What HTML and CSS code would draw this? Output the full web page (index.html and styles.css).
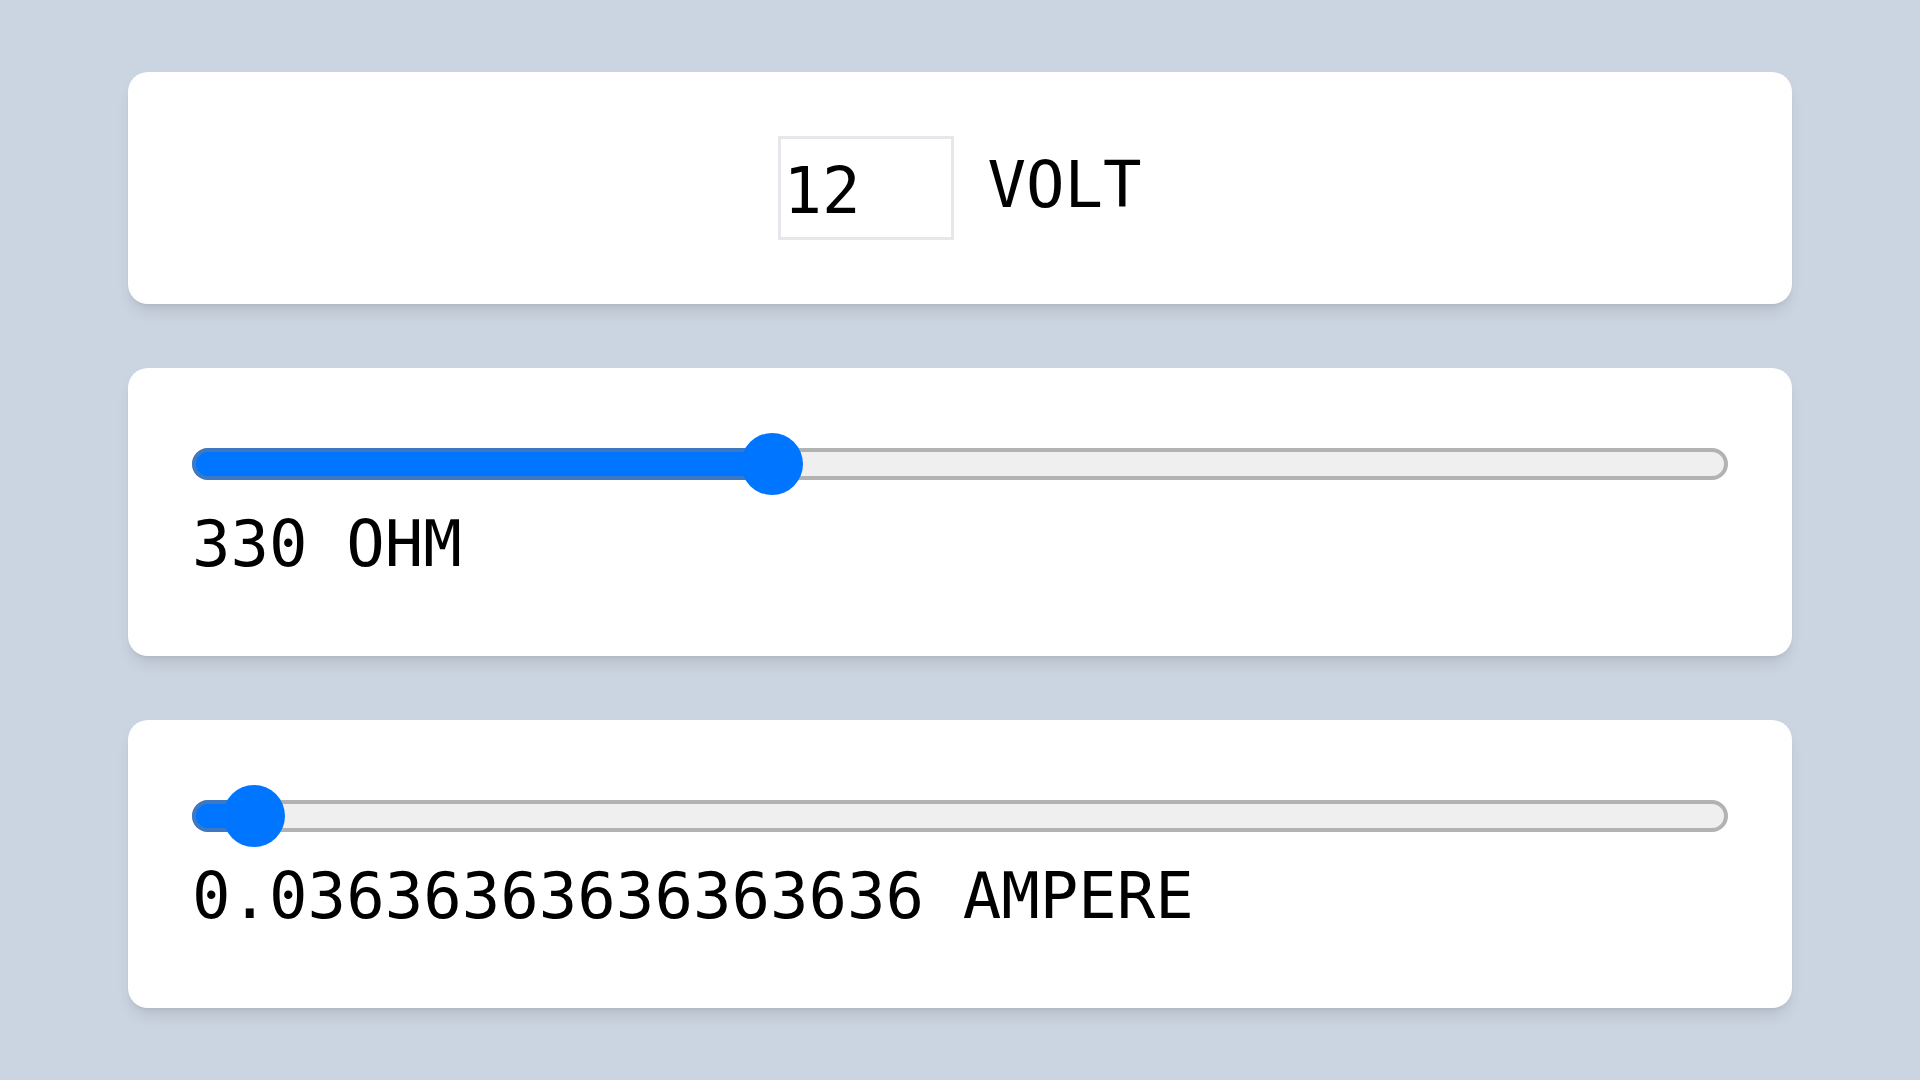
FILE: index.html
```html
<!DOCTYPE html>
<html lang="en">
<head>
<meta charset="utf-8">
<title>Ohm's law</title>
<link rel="stylesheet" href="styles.css">
</head>
<body>
<main class="stack">
  <section class="card card-volt">
    <div class="volt-row">
      <input class="volt-input" type="text" value="12">
      <span class="unit">VOLT</span>
    </div>
  </section>
  <section class="card">
    <div class="range" style="--f: 0.3725">
      <div class="track">
        <div class="fill"></div>
      </div>
      <div class="thumb"></div>
    </div>
    <div class="value">330 OHM</div>
  </section>
  <section class="card">
    <div class="range" style="--f: 0.0207">
      <div class="track">
        <div class="fill"></div>
      </div>
      <div class="thumb"></div>
    </div>
    <div class="value">0.03636363636363636 AMPERE</div>
  </section>
</main>
</body>
</html>
```
FILE: styles.css
```css
html, body {
  margin: 0;
  padding: 0;
}
body {
  background: #cbd5e1;
  font-family: "DejaVu Sans Mono", "Liberation Mono", monospace;
  color: #000;
  width: 1920px;
  height: 1080px;
  overflow: hidden;
}
.stack {
  display: flex;
  flex-direction: column;
  gap: 64px;
  padding: 72px 128px;
}
.card {
  background: #fff;
  border-radius: 20px;
  padding: 64px;
  box-shadow: 0 10px 15px -3px rgba(0, 0, 0, 0.1), 0 4px 6px -4px rgba(0, 0, 0, 0.1);
}
.volt-row {
  display: flex;
  justify-content: center;
  align-items: center;
  height: 104px;
  gap: 33px;
}
.volt-input {
  box-sizing: border-box;
  width: 176px;
  height: 104px;
  border: 3px solid #e5e7eb;
  border-radius: 0;
  padding: 0 2px;
  margin: 0;
  font-family: "DejaVu Sans Mono", "Liberation Mono", monospace;
  font-size: 64px;
  color: #000;
  background: #fff;
  outline: none;
  padding-top: 6px;
}
.unit {
  font-size: 64px;
  line-height: 1.5;
  margin-bottom: 6px;
}
.range {
  position: relative;
  height: 64px;
  display: flex;
  align-items: center;
}
.track {
  position: relative;
  box-sizing: border-box;
  width: 100%;
  height: 32px;
  border: 4px solid #b2b2b2;
  background: #efefef;
  border-radius: 16px;
}
.fill {
  position: absolute;
  left: -4px;
  top: -4px;
  bottom: -4px;
  box-sizing: border-box;
  width: calc(31px + (100% - 54px) * var(--f));
  border: 4px solid #3d78c2;
  border-right: none;
  background: #0075ff;
  border-radius: 16px 0 0 16px;
}
.thumb {
  position: absolute;
  top: 1px;
  left: calc((100% - 62px) * var(--f));
  width: 62px;
  height: 62px;
  border-radius: 50%;
  background: #0075ff;
}
.value {
  font-size: 64px;
  line-height: 1.5;
  white-space: nowrap;
}
```
